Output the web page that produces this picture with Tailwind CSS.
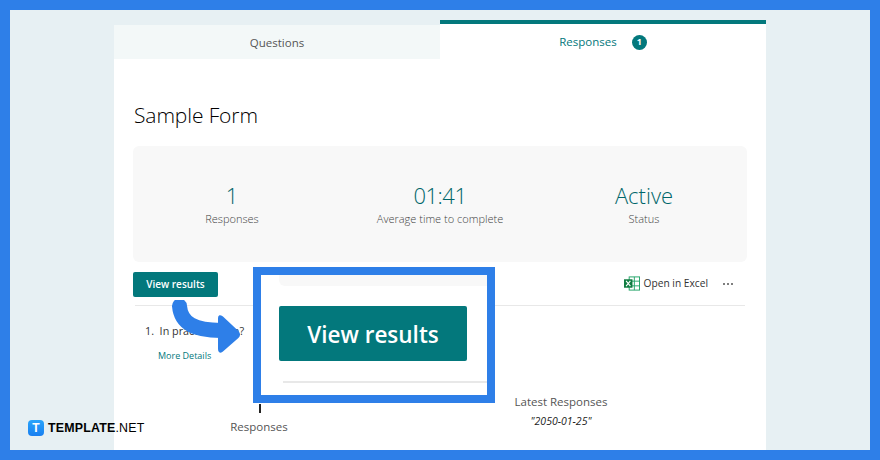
<!DOCTYPE html>
<html lang="en">
<head>
    <meta charset="UTF-8">
    <title>Sample Form</title>
    <script src="https://cdn.jsdelivr.net/npm/@tailwindcss/browser@4"></script>
</head>
<body class="w-[880px] h-[460px] overflow-hidden font-['Open_Sans',sans-serif]">
    <div class="relative w-[880px] h-[460px] border-[10px] border-[#2e7fe8] bg-[#e7f0f3] overflow-hidden">

        <!-- Form card -->
        <div class="ml-[104px] mt-[10px] w-[652px] h-[430px] flex flex-col">
            <div class="flex items-end h-[39px] shrink-0">
                <div class="w-[326px] h-[34px] pt-[1px] bg-[#f3f8f8] flex items-center justify-center text-[11.5px] text-[#555]">Questions</div>
                <div class="w-[326px] h-[39px] pt-[1px] bg-white border-t-4 border-[#03787c] flex items-center justify-center gap-[15px] text-[11.5px] text-[#03787c]">
                    <span>Responses</span>
                    <span class="w-[15px] h-[15px] rounded-full bg-[#03787c] text-white text-[9px] font-bold flex items-center justify-center">1</span>
                </div>
            </div>

            <div class="bg-white grow px-[19px]">
                <h1 class="mt-[41px] ml-[1px] text-[21px] leading-[30px] font-light tracking-[-0.1px] text-black">Sample Form</h1>

                <div class="mt-[16px] w-[614px] h-[116px] bg-[#f8f8f8] rounded-md grid grid-cols-[198px_218px_190px] items-start pt-[35px]">
                    <div class="text-center">
                        <div class="text-[22px] leading-[28px] font-light text-[#00666a]">1</div>
                        <div class="mt-[2px] text-[11px] leading-[16px] font-light text-[#444]">Responses</div>
                    </div>
                    <div class="text-center">
                        <div class="text-[22px] leading-[28px] font-light tracking-[-0.5px] text-[#00666a]">01:41</div>
                        <div class="mt-[2px] text-[11px] leading-[16px] font-light text-[#444]">Average time to complete</div>
                    </div>
                    <div class="text-center">
                        <div class="text-[22px] leading-[28px] font-light text-[#00666a]">Active</div>
                        <div class="mt-[2px] text-[11px] leading-[16px] font-light text-[#444]">Status</div>
                    </div>
                </div>

                <div class="mt-[9px] h-[26px] flex items-center justify-between">
                    <button class="w-[85px] h-[25px] rounded-[2px] bg-[#03787c] text-white text-[10px] font-semibold">View results</button>
                    <div class="flex items-center mr-[14px] text-[10.2px] text-[#333]">
                        <svg class="w-[16px] h-[15px] mr-[4px]" viewBox="0 0 17 15">
                            <rect x="5.5" y="0.5" width="11" height="14" fill="#fff" stroke="#21a366"/>
                            <path d="M5.5 5h11M5.5 10h11M11 0.5v14" stroke="#21a366" fill="none"/>
                            <rect x="0" y="3" width="9" height="9" fill="#107c41"/>
                            <path d="M2.2 4.8l4.6 5.4M6.8 4.8l-4.6 5.4" stroke="#fff" stroke-width="1.2" fill="none"/>
                        </svg>
                        <span>Open in Excel</span>
                        <span class="ml-[15px] flex gap-[2px]">
                            <i class="w-[2px] h-[2px] rounded-full bg-[#555]"></i>
                            <i class="w-[2px] h-[2px] rounded-full bg-[#555]"></i>
                            <i class="w-[2px] h-[2px] rounded-full bg-[#555]"></i>
                        </span>
                    </div>
                </div>

                <div class="mt-[8px] ml-[2px] w-[610px] border-t border-[#e8e8e8]"></div>

                <div class="ml-[12px] mt-[17px] text-[10.8px] leading-[16px] text-[#333]">1.&nbsp; In practical plan?</div>
                <div class="ml-[25px] mt-[10px] text-[9px] leading-[14px] text-[#03787c]">More Details</div>

                <div class="mt-[21px] grid grid-cols-[252px_352px] text-center">
                    <div class="pt-[20px]">
                        <div class="ml-[126px] w-[2px] h-[9px] bg-[#252423]"></div>
                        <div class="mt-[6px] text-[11.5px] leading-[16px] text-[#555]">Responses</div>
                    </div>
                    <div class="pt-[10px] w-[352px]">
                        <div class="text-[11.5px] leading-[16px] text-[#555]">Latest Responses</div>
                        <div class="mt-[3px] text-[10.5px] leading-[16px] italic text-[#222]">"2050-01-25"</div>
                    </div>
                </div>
            </div>
        </div>

        <!-- Zoomed highlight over the page -->
        <div class="absolute left-[243px] top-[257px] w-[242px] h-[136px] border-8 border-[#2e7fe8] bg-white">
            <div class="ml-[18px] h-[11px] bg-[#f8f8f8] rounded-bl-md"></div>
            <div class="ml-[18px] mt-[20px] pt-[2px] w-[188px] h-[55px] rounded-[2px] bg-[#03787c] text-white text-[22.5px] font-semibold flex items-center justify-center">View results</div>
            <div class="ml-[22px] mt-[20px] h-[2px] bg-[#e8e8e8]"></div>
        </div>

        <!-- Curved arrow -->
        <svg class="absolute left-[161px] top-[290px] w-[80px] h-[64px]" viewBox="0 0 80 64">
            <path d="M8.5 6C10 24 24 30 50 30.5" fill="none" stroke="#2e7fe8" stroke-width="15" stroke-linecap="round"/>
            <path d="M48 18Q48 15 51 17L67 32Q69 34.500 67 37L51 51Q48 53 48 49Z" fill="#2e7fe8" stroke="#2e7fe8" stroke-width="2" stroke-linejoin="round"/>
        </svg>

        <!-- Watermark -->
        <div class="absolute left-[18px] top-[410px] flex items-center font-['Liberation_Sans',sans-serif] text-[12.4px] leading-[16px] text-black">
            <span class="w-[16px] h-[16px] mr-[4px] rounded-[4px] bg-gradient-to-b from-[#2aa4fb] to-[#1a7ff0] text-white text-[12px] font-bold flex items-center justify-center">T</span>
            <span class="font-bold tracking-[0.2px]">TEMPLATE</span><span class="tracking-[0.2px]">.NET</span>
        </div>
    </div>
</body>
</html>
